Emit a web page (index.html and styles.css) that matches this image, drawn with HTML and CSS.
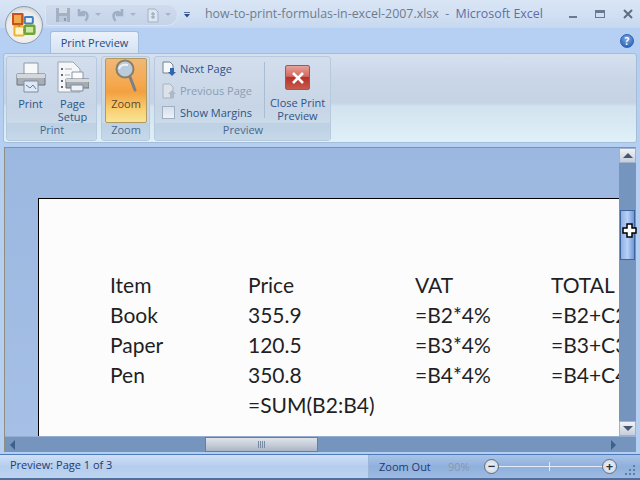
FILE: index.html
```html
<!DOCTYPE html>
<html>

<head>
    <title>how-to-print-formulas-in-excel-2007.xlsx - Microsoft Excel</title>
    <link rel="stylesheet" href="styles.css">
</head>

<body>
    <div class="window">
        <!-- office button sits over the title bar and the tab row -->
        <div class="office-button">
            <svg width="30" height="30" viewBox="0 0 30 30">
                <rect x="1" y="1" width="12" height="13" rx="1" fill="#f2a84c" stroke="#c8501c" stroke-width="3" />
                <rect x="16" y="5" width="10" height="8" rx="1" fill="#e8f2fb" stroke="#3f7fc4" stroke-width="2.5" />
                <rect x="3" y="17" width="12" height="11" rx="1" fill="#fff6c8" stroke="#eeb030" stroke-width="2.5" />
                <rect x="16" y="16" width="12" height="10" rx="1" fill="#cfe6a8" stroke="#6fa532" stroke-width="3" />
                <path d="M9 14v3M15 9h2M16 21h-2" stroke="#7d8a60" stroke-width="2" />
            </svg>
        </div>

        <div class="title-bar">
            <div class="qat">
                <svg class="qat-icon" width="16" height="16" viewBox="0 0 16 16">
                    <path d="M1 1h14v14H1z" fill="#a3b1c7" />
                    <path d="M4 1h8v5H4z" fill="#d3dbe8" />
                    <path d="M4 9h8v6H4z" fill="#bcc8d9" />
                    <path d="M9 11h2v3H9z" fill="#8d9cb4" />
                </svg>
                <svg class="qat-icon" width="16" height="16" viewBox="0 0 16 16">
                    <path d="M4 2v6h6M4.500 7.500C7 4 12 4.500 12.500 8.500c.2 2-.8 4-2 5.500" fill="none" stroke="#a0afc6" stroke-width="2.600" />
                </svg>
                <span class="qat-drop"></span>
                <svg class="qat-icon" width="16" height="16" viewBox="0 0 16 16">
                    <path d="M12 2v6H6M11.500 7.500C9 4 4 4.500 3.500 8.500c-.2 2 .8 4 2 5.500" fill="none" stroke="#a0afc6" stroke-width="2.600" />
                </svg>
                <span class="qat-drop"></span>
                <svg class="qat-icon" width="16" height="16" viewBox="0 0 16 16">
                    <path d="M3 2h7l3 3v10H3z" fill="#dfe6f0" stroke="#a3b1c6" />
                    <path d="M6 7h4M6 10h4M8 5v7" stroke="#8fa2ba" />
                </svg>
                <span class="qat-drop"></span>
            </div>
            <div class="qat-more"></div>
            <div class="title-text">how-to-print-formulas-in-excel-2007.xlsx&nbsp; - &nbsp;<span class="app-name">Microsoft Excel</span></div>
            <div class="window-buttons">
                <span class="win-min"></span>
                <span class="win-max"></span>
                <svg width="10" height="10" viewBox="0 0 10 10">
                    <path d="M1 1l8 8M9 1l-8 8" stroke="#5e6e84" stroke-width="2" />
                </svg>
            </div>
        </div>

        <div class="tab-row">
            <div class="tab">Print Preview</div>
            <div class="help-icon">?</div>
        </div>

        <div class="ribbon">
            <div class="group group-print">
                <div class="group-body">
                    <div class="big-button btn-print">
                        <svg width="32" height="32" viewBox="0 0 32 32">
                            <path d="M9 2h14v12H9z" fill="#f7f8fa" stroke="#8d98a6" />
                            <path d="M2 13h28v11H2z" fill="#a9aeb5" stroke="#6d747d" />
                            <path d="M2 13h28v4H2z" fill="#d4d7db" />
                            <path d="M9 20h14v11H9z" fill="#dfe9f5" stroke="#7c8da3" />
                            <path d="M11 24l4 3 3-3 3 4" fill="none" stroke="#5f7fa8" />
                        </svg>
                        <span>Print</span>
                    </div>
                    <div class="big-button btn-setup">
                        <svg width="32" height="32" viewBox="0 0 32 32">
                            <path d="M1 1h15l7 7v23H1z" fill="#f5f6f8" stroke="#9aa3ae" />
                            <path d="M4 8h2M4 14h2M4 20h2M4 26h2" stroke="#5f6b78" stroke-width="2" />
                            <path d="M8 8h7M8 14h5" stroke="#a8b0ba" />
                            <path d="M15 11h11v9H15z" fill="#fbfbfc" stroke="#8d98a6" />
                            <path d="M9 18h23v9H9z" fill="#a5abb2" stroke="#6d747d" />
                            <path d="M9 18h23v3H9z" fill="#d4d7db" />
                            <path d="M14 24h12v6H14z" fill="#eef1f5" stroke="#7c8da3" />
                        </svg>
                        <span>Page<br>Setup</span>
                    </div>
                </div>
                <div class="group-label">Print</div>
            </div>

            <div class="group group-zoom">
                <div class="group-body">
                    <div class="big-button btn-zoom">
                        <svg width="32" height="34" viewBox="0 0 32 34">
                            <circle cx="15" cy="10" r="8.500" fill="#b9cbdc" stroke="#8b7f66" stroke-width="2" />
                            <path d="M9 10c1-4 5-5 9-4" fill="none" stroke="#eef3f8" stroke-width="2" />
                            <path d="M20 18l5 13" stroke="#7b7f88" stroke-width="3" stroke-linecap="round" />
                        </svg>
                        <span>Zoom</span>
                    </div>
                </div>
                <div class="group-label">Zoom</div>
            </div>

            <div class="group group-preview">
                <div class="group-body">
                    <div class="small-list">
                        <div class="small-button">
                            <svg width="16" height="16" viewBox="0 0 16 16">
                                <path d="M2 1h7l3 3v8H2z" fill="#f7f8fa" stroke="#77818e" />
                                <path d="M9 7h4v4h2l-4 4-4-4h2z" fill="#2f66b0" />
                            </svg>
                            <span>Next Page</span>
                        </div>
                        <div class="small-button is-disabled">
                            <svg width="16" height="16" viewBox="0 0 16 16">
                                <path d="M2 1h7l3 3v11H2z" fill="#dbe2ea" stroke="#a7b2c0" />
                                <path d="M9 15v-4H7l4-4 4 4h-2v4z" fill="#aeb9c7" />
                            </svg>
                            <span>Previous Page</span>
                        </div>
                        <div class="small-button">
                            <span class="check-box"></span>
                            <span>Show Margins</span>
                        </div>
                    </div>
                    <div class="group-sep"></div>
                    <div class="big-button btn-close">
                        <div class="close-icon">
                            <svg width="14" height="12" viewBox="0 0 14 12">
                                <path d="M2 1l10 10M12 1L2 11" stroke="#fff" stroke-width="2.500" />
                            </svg>
                        </div>
                        <span>Close Print<br>Preview</span>
                    </div>
                </div>
                <div class="group-label">Preview</div>
            </div>
        </div>

        <div class="workspace">
            <div class="view-row">
                <div class="canvas">
                    <div class="page">
                        <div class="sheet">
                            <span>Item</span><span>Price</span><span>VAT</span><span>TOTAL</span>
                            <span>Book</span><span>355.9</span><span>=B2*4%</span><span>=B2+C2</span>
                            <span>Paper</span><span>120.5</span><span>=B3*4%</span><span>=B3+C3</span>
                            <span>Pen</span><span>350.8</span><span>=B4*4%</span><span>=B4+C4</span>
                            <span></span><span class="sum">=SUM(B2:B4)</span>
                        </div>
                    </div>
                </div>
                <div class="v-scroll">
                    <div class="scroll-btn"><span class="arrow-up"></span></div>
                    <div class="v-track">
                        <div class="v-thumb"></div>
                    </div>
                    <div class="scroll-btn"><span class="arrow-down"></span></div>
                </div>
            </div>
            <div class="h-scroll">
                <span class="arrow-left"></span>
                <div class="h-thumb"><span class="grip"></span></div>
                <span class="arrow-right"></span>
            </div>
        </div>

        <div class="status-bar">
            <div class="status-left">Preview: Page 1 of 3</div>
            <div class="status-right">
                <span class="zoom-out">Zoom Out</span>
                <span class="zoom-pct">90%</span>
                <span class="zoom-btn">&minus;</span>
                <div class="zoom-slider"><span class="zoom-tick"></span></div>
                <span class="zoom-btn">+</span>
                <svg class="resize-grip" width="12" height="12" viewBox="0 0 12 12">
                    <path d="M9 1h2v2H9zM5 5h2v2H5zM9 5h2v2H9zM1 9h2v2H1zM5 9h2v2H5zM9 9h2v2H9z" fill="#5f7da8" />
                </svg>
            </div>
        </div>

        <!-- mouse pointer over the scroll thumb -->
        <svg class="cursor" width="15" height="15" viewBox="0 0 15 15">
            <path d="M5 1h5v4h4v5h-4v4H5v-4H1V5h4z" fill="#fff" stroke="#000" stroke-width="1.500" />
        </svg>
    </div>
</body>

</html>
```

FILE: styles.css
```css
* {
    box-sizing: border-box;
}

body {
    margin: 0;
    font-family: "Open Sans", "Noto Sans", sans-serif;
    font-size: 11px;
    color: #2c4a78;
}

.window {
    position: relative;
    width: 640px;
    height: 480px;
    overflow: hidden;
    display: flex;
    flex-direction: column;
    background-color: #b4cff1;
}

/* title bar */

.title-bar {
    height: 28px;
    flex-shrink: 0;
    display: flex;
    align-items: center;
    padding-left: 45px;
    background: linear-gradient(#d9e5f5, #d3e1f3 45%, #c7d9f0);
    border-bottom: 1px solid #c4d9f4;
}

.qat {
    width: 133px;
    height: 22px;
    margin-top: 2px;
    padding-left: 10px;
    display: flex;
    align-items: center;
    gap: 4px;
    border-radius: 3px 11px 11px 3px;
    background: linear-gradient(#d0dcee, #c4d3e8);
    box-shadow: inset 0 0 0 1px #dae4f3;
}

.qat-icon {
    flex-shrink: 0;
}

.qat-drop {
    width: 0;
    height: 0;
    margin-right: 5px;
    border-left: 3px solid transparent;
    border-right: 3px solid transparent;
    border-top: 3px solid #a5b3c9;
}

.qat-more {
    width: 6px;
    height: 6px;
    margin-left: 6px;
    margin-top: 2px;
    clip-path: polygon(0 0, 100% 0, 100% 20%, 0 20%, 0 40%, 100% 40%, 50% 100%, 0 40%);
    background-color: #2d4f86;
}

.title-text {
    margin-left: 15px;
    font-size: 12.4px;
    color: #6f7c8e;
    white-space: nowrap;
}

.app-name {
    color: #5f6fa4;
}

.window-buttons {
    margin-left: auto;
    width: 80px;
    padding: 0 7px 0 9px;
    display: flex;
    align-items: center;
    justify-content: space-between;
}

.win-min {
    width: 8px;
    height: 2px;
    margin-top: 7px;
    background-color: #6a7a90;
}

.win-max {
    width: 10px;
    height: 8px;
    border: 1px solid #6a7a90;
    border-top-width: 3px;
}

/* office button */

.office-button {
    position: absolute;
    left: 5px;
    top: 6px;
    width: 38px;
    height: 38px;
    display: flex;
    align-items: center;
    justify-content: center;
    border-radius: 50%;
    border: 1px solid #8f9bad;
    background: radial-gradient(circle at 50% 60%, #fbfbf8, #e9ebea 60%, #aab3bf);
    z-index: 2;
}

.office-button svg {
    width: 24px;
    height: 24px;
}

/* tabs */

.tab-row {
    height: 25px;
    flex-shrink: 0;
    display: flex;
    align-items: flex-end;
    padding-left: 50px;
    padding-right: 6px;
    background-color: #b5d0f3;
}

.tab {
    width: 89px;
    height: 22px;
    padding-top: 3px;
    text-align: center;
    font-size: 11px;
    color: #254a80;
    border: 1px solid #a4bcdc;
    border-bottom: none;
    border-radius: 3px 3px 0 0;
    background: linear-gradient(#eaf1fb, #d6e2f2);
}

.help-icon {
    width: 14px;
    height: 14px;
    margin-left: auto;
    margin-bottom: 5px;
    border-radius: 50%;
    border: 1px solid #2b62b4;
    background: radial-gradient(circle at 50% 30%, #7fa9e4, #1f55ad);
    color: #fff;
    font-size: 10px;
    font-weight: bold;
    line-height: 12px;
    text-align: center;
}

/* ribbon */

.ribbon {
    height: 90px;
    flex-shrink: 0;
    margin: 0 3px;
    padding: 2px 0 1px 2px;
    display: flex;
    gap: 4px;
    border: 1px solid #a4bdd9;
    border-radius: 3px;
    background: linear-gradient(#d6e0ef, #c9d6e7 30%, #c5d3e3 55%, #d3e3ef 60%, #e0f0f8);
}

.group {
    display: flex;
    flex-direction: column;
    border: 1px solid #b6c9df;
    border-radius: 3px;
    background: linear-gradient(#d3deed, #c7d5e6 60%, #cfdfec);
}

.group-print {
    width: 91px;
}

.group-zoom {
    width: 49px;
}

.group-preview {
    width: 177px;
}

.group-body {
    flex: 1;
    display: flex;
    min-height: 0;
}

.group-label {
    height: 17px;
    padding-left: 1px;
    line-height: 14px;
    text-align: center;
    color: #46688f;
    background: linear-gradient(#bdd0e4, #c6d9e9);
    border-radius: 0 0 3px 3px;
}

.big-button {
    display: flex;
    flex-direction: column;
    align-items: center;
    line-height: 13px;
    text-align: center;
    color: #2f5486;
}

.big-button svg {
    flex-shrink: 0;
}

.btn-print {
    width: 47px;
    padding-top: 4px;
}

.btn-print span,
.btn-setup span {
    margin-top: 4px;
}

.btn-setup {
    width: 37px;
    padding-top: 4px;
}

.btn-zoom {
    width: 43px;
    height: 65px;
    margin: 1px 2px 1px 3px;
    padding-top: 0;
    border: 1px solid #b09a62;
    border-radius: 2px;
    color: #5b4a2e;
    background: linear-gradient(#f0b878, #f5a84e 40%, #f3a040 52%, #f8cf72 80%, #f8e596);
}

.btn-zoom span {
    margin-top: 4px;
}

.small-list {
    width: 109px;
    padding: 1px 0 0 6px;
    display: flex;
    flex-direction: column;
}

.group-sep {
    width: 1px;
    height: 56px;
    margin-top: 5px;
    flex-shrink: 0;
    background-color: #a9bdd3;
}

.small-button {
    height: 22px;
    display: flex;
    align-items: center;
    gap: 3px;
    white-space: nowrap;
    color: #2f5486;
}

.small-button svg {
    flex-shrink: 0;
}

.is-disabled {
    color: #8b9db3;
}

.check-box {
    width: 13px;
    height: 13px;
    margin: 0 2px 0 1px;
    border: 1px solid #9fb0c4;
    background: linear-gradient(#d6dfea, #eef2f7);
}

.btn-close {
    flex: 1;
    padding-top: 8px;
}

.btn-close span {
    margin-top: 6px;
}

.close-icon {
    width: 25px;
    height: 25px;
    flex-shrink: 0;
    display: flex;
    align-items: center;
    justify-content: center;
    border: 1px solid #9c5b52;
    border-radius: 2px;
    background: linear-gradient(#e8a098, #d06a60 45%, #b8322a 50%, #c75a4c);
}

/* sheet area */

.workspace {
    flex: 1;
    min-height: 0;
    margin: 4px 4px 2px 4px;
    display: flex;
    flex-direction: column;
    border-top: 1px solid #8f8f7c;
    border-left: 1px solid #8f8f7c;
    background-color: #a3bde4;
}

.view-row {
    flex: 1;
    min-height: 0;
    display: flex;
}

.canvas {
    flex: 1;
    min-width: 0;
    padding: 50px 0 0 33px;
    overflow: hidden;
    background: linear-gradient(#9cb8e0, #a5bfe6);
}

.page {
    height: 240px;
    padding: 70px 0 0 71px;
    overflow: hidden;
    border: 1px solid #000;
    border-right: none;
    border-bottom: none;
    background-color: #fcfcfd;
}

.sheet {
    display: grid;
    grid-template-columns: 138px 167px 136px 90px;
    grid-auto-rows: 30px;
    align-items: center;
    font-family: Lato, "Open Sans", sans-serif;
    font-size: 21px;
    color: #1f1f24;
    white-space: nowrap;
}

.v-scroll {
    width: 17px;
    flex-shrink: 0;
    display: flex;
    flex-direction: column;
    background-color: #7595bf;
}

.scroll-btn {
    height: 15px;
    flex-shrink: 0;
    display: flex;
    align-items: center;
    justify-content: center;
    border: 1px solid #9fb2cd;
    background: linear-gradient(#f0f2f6, #c6cedb);
}

.arrow-up,
.arrow-down {
    width: 0;
    height: 0;
    border-left: 5px solid transparent;
    border-right: 5px solid transparent;
}

.arrow-up {
    border-bottom: 5px solid #46586f;
}

.arrow-down {
    border-top: 5px solid #46586f;
}

.v-track {
    flex: 1;
    padding-top: 47px;
}

.v-thumb {
    width: 15px;
    height: 50px;
    margin-left: 1px;
    border: 1px solid #3d659c;
    background: linear-gradient(90deg, #8fb0e4, #b9d0f5 50%, #6f97d8);
}

.h-scroll {
    height: 16px;
    flex-shrink: 0;
    display: flex;
    align-items: center;
    padding-left: 5px;
    padding-right: 20px;
    border-top: 1px solid #94add0;
    background-color: #7595bf;
}

.arrow-left,
.arrow-right {
    width: 0;
    height: 0;
    border-top: 5px solid transparent;
    border-bottom: 5px solid transparent;
}

.arrow-left {
    border-right: 5px solid #3f5f8c;
}

.arrow-right {
    margin-left: auto;
    border-left: 5px solid #3f5f8c;
}

.h-thumb {
    width: 113px;
    height: 15px;
    margin-left: 190px;
    display: flex;
    align-items: center;
    justify-content: center;
    border: 1px solid #667fa0;
    background: linear-gradient(#dfe4ea, #c6ced9 50%, #aab4c4);
}

.grip {
    width: 8px;
    height: 7px;
    background: repeating-linear-gradient(90deg, #7a8aa0 0 1px, transparent 1px 2px);
}

/* status bar */

.status-bar {
    height: 26px;
    flex-shrink: 0;
    display: flex;
    align-items: stretch;
    border-top: 1px solid #4f7ab8;
    border-bottom: 2px solid #4f6f9f;
    background: linear-gradient(#cfe0f7, #b5cdee 50%, #bdd3f0);
}

.status-left {
    flex: 1;
    padding: 2px 0 0 10px;
    font-size: 11px;
    color: #1f3b70;
}

.status-right {
    width: 272px;
    padding: 0 4px 0 10px;
    display: flex;
    align-items: center;
    background: linear-gradient(#a9c3e8, #8fb0dd 50%, #9cbae2);
    border-left: 1px solid #9db6d8;
}

.zoom-out {
    width: 69px;
    color: #1f3b70;
}

.zoom-pct {
    width: 36px;
    color: #8a97ab;
}

.zoom-btn {
    width: 15px;
    height: 15px;
    flex-shrink: 0;
    border-radius: 50%;
    border: 1px solid #5f6f86;
    background: radial-gradient(circle, #f4f6f9, #c8d1dd);
    color: #26344a;
    font-size: 13px;
    font-weight: bold;
    line-height: 12px;
    text-align: center;
}

.zoom-slider {
    position: relative;
    width: 103px;
    height: 1px;
    background-color: #e4ecf8;
}

.zoom-tick {
    position: absolute;
    left: 50px;
    top: -4px;
    width: 1px;
    height: 9px;
    background-color: #e4ecf8;
}

.resize-grip {
    margin-left: auto;
    margin-top: 6px;
}

.cursor {
    position: absolute;
    left: 622px;
    top: 223px;
}
```
